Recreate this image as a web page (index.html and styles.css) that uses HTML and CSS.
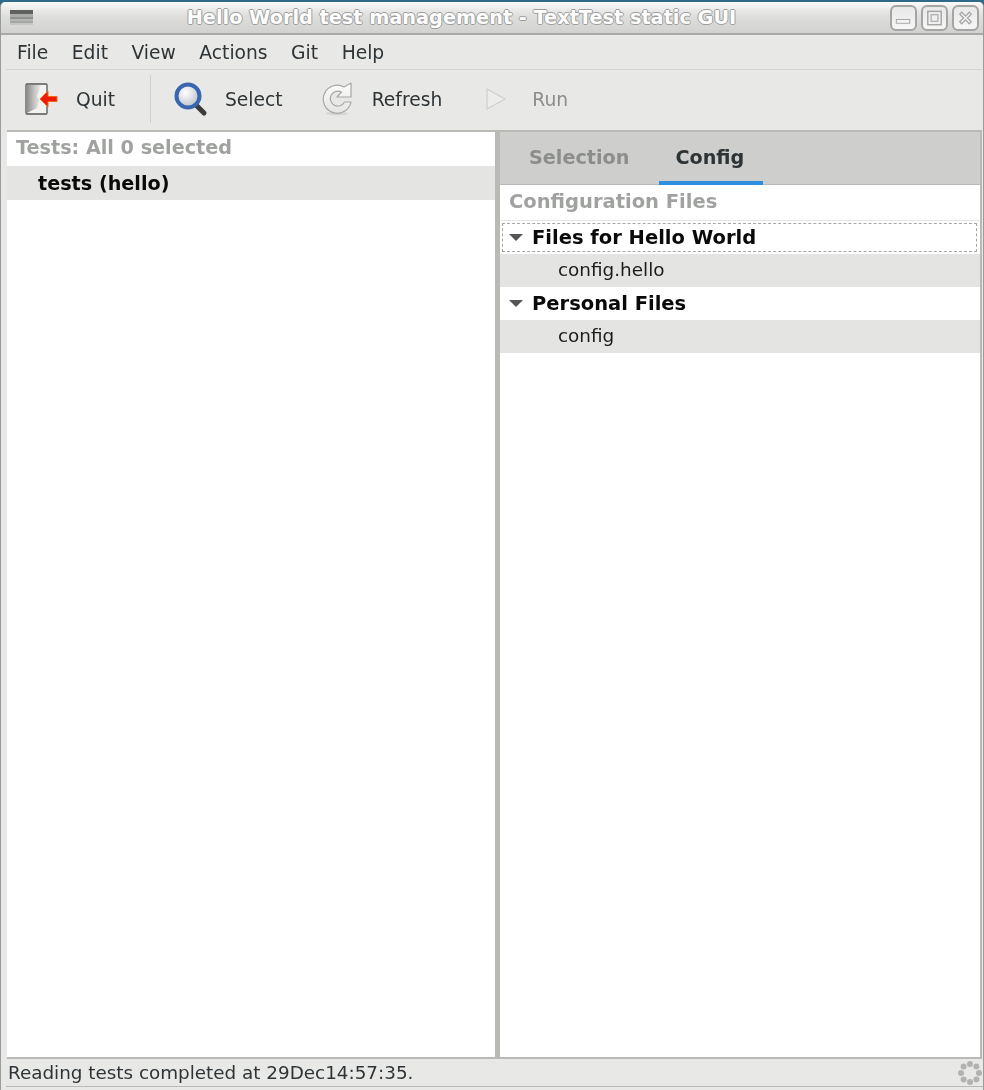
FILE: index.html
```html
<!DOCTYPE html>
<html lang="en">
<head>
<meta charset="utf-8">
<title>Hello World test management - TextTest static GUI</title>
<link rel="stylesheet" href="styles.css">
</head>
<body>
<div class="window">
  <header class="titlebar">
    <svg class="wm-menu" width="23" height="15" viewBox="0 0 23 15"><rect x="0" y="0" width="23" height="4" fill="#5f615f"/><rect x="0" y="4" width="23" height="3" fill="#a9aba9"/><rect x="0" y="7" width="23" height="2" fill="#8f918f"/><rect x="0" y="9" width="23" height="2" fill="#b5b7b5"/><rect x="0" y="11" width="23" height="2" fill="#a5a7a5"/><rect x="0" y="13" width="23" height="2" fill="#c4c6c4"/></svg>
    <div class="title">Hello World test management - TextTest static GUI</div>
    <div class="wm-buttons">
      <span class="wm-btn"><svg width="24" height="24" viewBox="0 0 24 24"><rect x="4.500" y="13.500" width="14" height="4" fill="#f4f4f4" stroke="#a4a6a4"/></svg></span>
      <span class="wm-btn"><svg width="24" height="24" viewBox="0 0 24 24"><rect x="5" y="5" width="14" height="14" fill="none" stroke="#a4a6a4" stroke-width="1.500"/><rect x="8.500" y="8.500" width="7" height="7" fill="none" stroke="#b4b6b4" stroke-width="1.500"/></svg></span>
      <span class="wm-btn"><svg width="24" height="24" viewBox="0 0 24 24"><path d="M6 8l2-2 4 4 4-4 2 2-4 4 4 4-2 2-4-4-4 4-2-2 4-4z" fill="#f2f2f2" stroke="#a4a6a4" stroke-width="1.300"/></svg></span>
    </div>
  </header>

  <nav class="menubar">
    <span class="menu-item">File</span>
    <span class="menu-item">Edit</span>
    <span class="menu-item">View</span>
    <span class="menu-item">Actions</span>
    <span class="menu-item">Git</span>
    <span class="menu-item">Help</span>
  </nav>

  <div class="toolbar">
    <div class="tool tool-quit">
      <svg width="36" height="36" viewBox="0 0 36 36"><defs><linearGradient id="door" x1="0" x2="1" y1="0" y2="0"><stop offset="0" stop-color="#8d8f8d"/><stop offset="0.6" stop-color="#c8c8c6"/><stop offset="1" stop-color="#e6e6e4"/></linearGradient></defs><rect x="2" y="3" width="21" height="30" rx="1" fill="#f2f2f0" stroke="#555753" stroke-width="1.300"/><path d="M3 4h13l-1 6-2 5 2 4-2 8-10 5z" fill="url(#door)"/><path d="M16 18l8-8v5.500h9v5h-9v5.500z" fill="#ee1a0a" stroke="#ef6a10" stroke-width="1" stroke-linejoin="round"/></svg>
      <span>Quit</span>
    </div>
    <div class="tool-sep"></div>
    <div class="tool tool-select">
      <svg width="36" height="36" viewBox="0 0 36 36"><defs><radialGradient id="lens" cx="0.4" cy="0.35" r="0.7"><stop offset="0" stop-color="#fff"/><stop offset="1" stop-color="#b9bec4"/></radialGradient></defs><path d="M23 24l8 8" stroke="#3a3c3c" stroke-width="5" stroke-linecap="round"/><circle cx="15" cy="15" r="11.500" fill="url(#lens)" stroke="#3a66b0" stroke-width="4"/></svg>
      <span>Select</span>
    </div>
    <div class="tool tool-refresh">
      <svg width="34" height="36" viewBox="0 0 34 36"><defs><linearGradient id="ref" x1="0" x2="0" y1="0" y2="1"><stop offset="0" stop-color="#fdfdfd"/><stop offset="1" stop-color="#e4e4e2"/></linearGradient></defs><ellipse cx="15" cy="32.500" rx="11" ry="1.800" fill="#d4d4d2"/><path d="M22 6A14 14 0 1 0 29 21H22.500A7.500 7.500 0 1 1 19.500 11L15 16H29V2z" fill="url(#ref)" stroke="#a6a8a6" stroke-width="1.200" stroke-linejoin="round"/></svg>
      <span>Refresh</span>
    </div>
    <div class="tool tool-run">
      <svg width="24" height="26" viewBox="0 0 24 26"><path d="M3 3l18 10-18 10z" fill="#ededeb" stroke="#cdcfcd" stroke-width="1.200" stroke-linejoin="round"/></svg>
      <span>Run</span>
    </div>
  </div>

  <main class="panes">
    <section class="pane-left">
      <div class="col-head left-head">Tests: All 0 selected</div>
      <div class="row row-test">tests (hello)</div>
    </section>
    <section class="pane-right">
      <div class="tabs">
        <div class="tab">Selection</div>
        <div class="tab tab-active">Config</div>
      </div>
      <div class="tab-body">
        <div class="col-head right-head">Configuration Files</div>
        <div class="group group-focus"><span class="arrow"></span>Files for Hello World</div>
        <div class="row row-file">config.hello</div>
        <div class="group"><span class="arrow"></span>Personal Files</div>
        <div class="row row-file">config</div>
      </div>
    </section>
  </main>

  <footer class="statusbar">
    <span class="status-text">Reading tests completed at 29Dec14:57:35.</span>
    <svg class="spinner" width="24" height="24" viewBox="0 0 24 24"><g fill="#b2b2b2"><circle cx="12" cy="3" r="3"/><circle cx="18.400" cy="5.600" r="3"/><circle cx="21" cy="12" r="3"/><circle cx="18.400" cy="18.400" r="3"/><circle cx="12" cy="21" r="3"/><circle cx="5.600" cy="18.400" r="3"/><circle cx="3" cy="12" r="3"/><circle cx="5.600" cy="5.600" r="3"/></g></svg>
  </footer>
</div>
</body>
</html>
```
FILE: styles.css
```css
* { box-sizing: border-box; }
html, body { margin: 0; height: 100%; }
body {
  background: #2f6a8a;
  font-family: "DejaVu Sans", sans-serif;
  overflow: hidden;
}
.window {
  height: 1088px;
  margin-top: 2px;
  background: #e8e8e7;
  border-radius: 5px 5px 0 0;
  border-left: 1px solid #9a9c9a;
  border-right: 1px solid #9a9c9a;
  display: flex;
  flex-direction: column;
  padding-bottom: 2px;
  filter: blur(0.35px);
}
.titlebar {
  height: 33px;
  flex: none;
  display: flex;
  align-items: center;
  padding: 0 4px 0 9px;
  background: linear-gradient(#fafafa, #dededd 45%, #d2d2d1);
  border-bottom: 2px solid #a9aaa8;
  border-radius: 5px 5px 0 0;
}
.wm-menu { flex: none; }
.title {
  flex: 1;
  text-align: center;
  color: #fdfdfd;
  font-weight: bold;
  font-size: 19.300px;
  text-shadow: 1px 0 #9c9e9c, -1px 0 #9c9e9c, 0 1px #9c9e9c, 0 -1px #9c9e9c;
  white-space: nowrap;
}
.wm-buttons { display: flex; gap: 4px; flex: none; }
.wm-btn {
  width: 27px;
  height: 26px;
  display: flex;
  align-items: center;
  justify-content: center;
  border: 2px solid #a4a6a4;
  border-radius: 6px;
  background: linear-gradient(#e8e8e8, #f6f6f6);
}
.menubar {
  height: 35px;
  flex: none;
  margin: 0 1px 0 5px;
  display: flex;
  align-items: center;
  gap: 23.500px;
  padding: 0 0 0 11px;
  font-size: 18.700px;
  color: #2e3436;
  border-bottom: 1px solid #d2d2d0;
}
.toolbar {
  height: 60px;
  flex: none;
  display: flex;
  align-items: center;
  font-size: 18.700px;
  color: #2e3436;
  padding: 0 0 2px 23px;
}
.tool { display: flex; align-items: center; }
.tool-quit { gap: 16px; width: 126px; }
.tool-sep { width: 1px; height: 48px; background: #d0d0ce; }
.tool-select { gap: 16px; margin-left: 22px; }
.tool-refresh { gap: 16px; margin-left: 39px; }
.tool-run { gap: 24px; margin-left: 42px; color: #8c8e8c; }
.panes {
  flex: 1;
  min-height: 0;
  display: flex;
  margin-left: 6px;
  margin-right: 1px;
  border-top: 2px solid #b9bab6;
  border-bottom: 2px solid #b9bab6;
}
.pane-left {
  width: 488px;
  flex: none;
  background: #fff;
}
.pane-right {
  flex: 1;
  min-width: 0;
  display: flex;
  flex-direction: column;
  border-left: 5px solid #b9bab6;
  border-right: 2px solid #b9bab6;
  background: #fff;
}
.col-head {
  font-weight: bold;
  color: #a0a2a0;
  font-size: 19.200px;
  white-space: nowrap;
}
.left-head { height: 34px; padding: 4px 0 0 9px; }
.row { font-size: 18.400px; color: #111; background: #e4e4e3; white-space: nowrap; }
.row-test {
  height: 34px;
  padding: 6px 0 0 31px;
  font-weight: bold;
  font-size: 19.200px;
  color: #0a0a0a;
}
.tabs {
  height: 53px;
  flex: none;
  display: flex;
  background: #cececc;
  border-bottom: 1px solid #b9bab6;
  padding-left: 10px;
}
.tab {
  font-weight: bold;
  font-size: 19.200px;
  color: #8c8e8c;
  padding: 14px 30px 0 19px;
  white-space: nowrap;
}
.tab-active {
  color: #2e3436;
  border-bottom: 4px solid #2e8fe0;
  padding: 14px 19px 0 16px;
  height: 53px;
}
.tab-body { flex: 1; }
.right-head {
  height: 36px;
  padding: 5px 0 0 9px;
  font-size: 19.500px;
  border-bottom: 1px solid #e6e6e6;
}
.group {
  height: 33px;
  display: flex;
  align-items: center;
  font-weight: bold;
  font-size: 19.500px;
  color: #0a0a0a;
  padding-left: 9px;
  white-space: nowrap;
}
.group-focus { outline: 1px dashed #a6a6a6; outline-offset: -3px; margin-right: 1px; }
.arrow {
  flex: none;
  width: 0;
  height: 0;
  margin-right: 9px;
  border-left: 7px solid transparent;
  border-right: 7px solid transparent;
  border-top: 7px solid #555;
}
.row-file { height: 33px; padding: 5px 0 0 58px; color: #1c1c1c; }
.statusbar {
  height: 28px;
  flex: none;
  margin: 0 0 1px 5px;
  display: flex;
  align-items: center;
  justify-content: space-between;
  font-size: 18.350px;
  color: #2e3436;
  padding: 0 1px 0 2px;
  border-bottom: 1px solid #b9bab6;
}
.spinner { flex: none; }
```
